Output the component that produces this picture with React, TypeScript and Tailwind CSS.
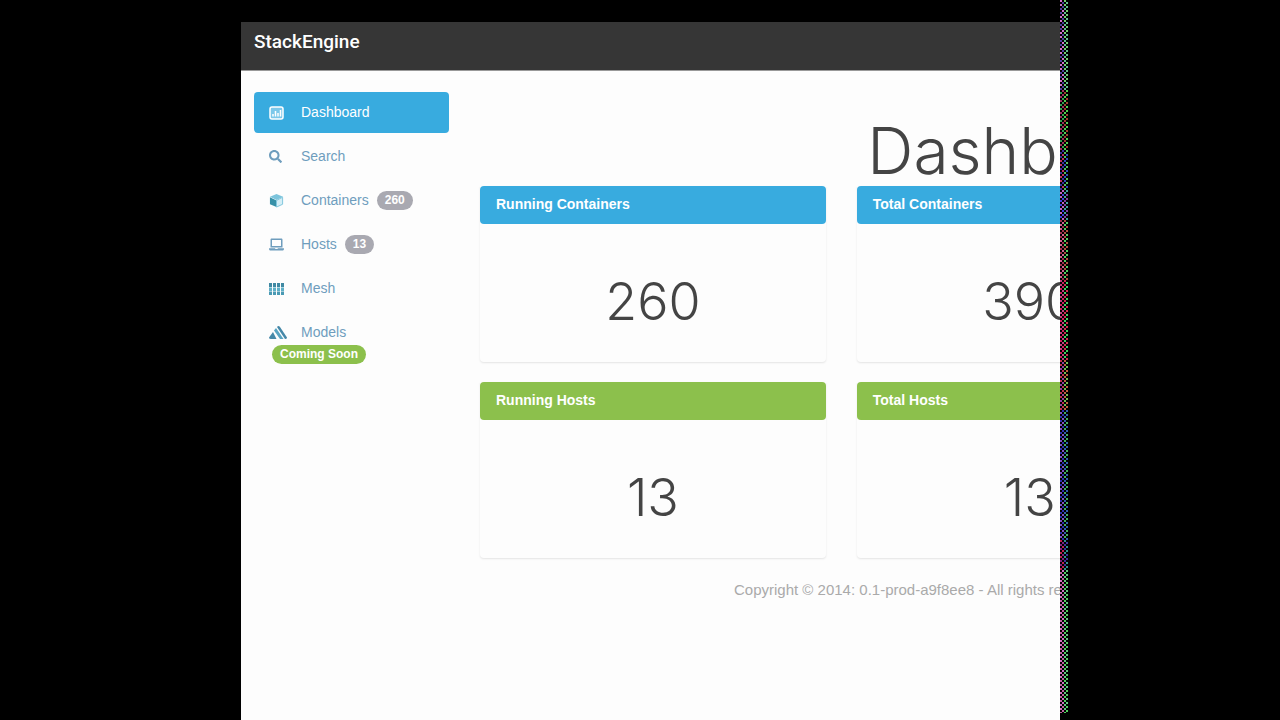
import React from "react";
import { FaLaptop, FaSearch } from "react-icons/fa";

const stats = [
  { title: "Running Containers", value: 260, color: "bg-[#38abdf]" },
  { title: "Total Containers", value: 390, color: "bg-[#38abdf]" },
  { title: "Running Hosts", value: 13, color: "bg-[#8cc04c]" },
  { title: "Total Hosts", value: 13, color: "bg-[#8cc04c]" },
];

// bands of the static, top to bottom: last row, then left and right colours
const noiseBands = [
  { end: 45, left: ["#d070c8", "#5040a0"], right: ["#70d070", "#60c090"] },
  { end: 75, left: ["#a03060", "#30a050"], right: ["#50d050", "#a04030"] },
  { end: 95, left: ["#c03060", "#4030a0"], right: ["#3050c0", "#50c060"] },
  { end: 110, left: ["#c060c0", "#4040e0"], right: ["#40a0a0", "#8040a0"] },
  { end: 140, left: ["#d06090", "#a03050"], right: ["#50d060", "#b05040"] },
  { end: 180, left: ["#d02060", "#c04080"], right: ["#40d060", "#d03050"] },
  { end: 205, left: ["#9040a0", "#c03050"], right: ["#70c050", "#c06040"] },
  { end: 270, left: ["#3030b0", "#8050c0"], right: ["#3060b0", "#40b060"] },
  { end: 285, left: ["#802080", "#c02050"], right: ["#4030a0", "#309090"] },
  { end: 357, left: ["#d070c0", "#c060a0"], right: ["#60c880", "#50d060"] },
];

function ChartIcon() {
  return (
    <svg className="size-4" viewBox="0 0 16 16" fill="none" stroke="currentColor">
      <rect x="1" y="2" width="13" height="12" rx="2" fill="#7cc8ea" strokeWidth="1.5" />
      <path d="M4 11.500V9M6.500 11.500V6M9 11.500V8M11.500 11.500V5" strokeWidth="1.5" />
    </svg>
  );
}

function CubeIcon() {
  return (
    <svg className="size-[15px]" viewBox="0 0 16 16">
      <path d="M1 4.500L8 8v7L1 12z" fill="#3791a8" />
      <path d="M1 4l7-3 7 3-7 3.500z" fill="#7cc4dc" />
      <path d="M8 8l6.500-3.500V12L8 15z" fill="#d4eef6" stroke="#7cc4dc" />
    </svg>
  );
}

function MeshIcon() {
  return (
    <svg className="size-4" viewBox="0 0 16 16">
      {[0, 4, 8, 12].map((x) => (
        <g key={x}>
          <rect x={x} y="2" width="3" height="4" fill="#4089a3" />
          <rect x={x} y="6.5" width="3" height="3.5" fill="#5fb0c8" />
          <rect x={x} y="10.5" width="3" height="3.5" fill="#4a9ab4" />
        </g>
      ))}
    </svg>
  );
}

function ModelsIcon() {
  return (
    <svg className="h-4 w-[18px]" viewBox="0 0 18 16">
      <path d="M4 7L0 12.500Q0 14 2 14h5.500z" fill="#4588a8" />
      <path d="M5 5.500L7 3l7.500 11H11z" fill="#58a4c2" />
      <path d="M8 2q1.500-2 3 0l7 10.500q0 1.500-2 1.500z" fill="#4588a8" />
    </svg>
  );
}

function NavLink({ icon, label, badge = "", active = false }) {
  return (
    <a
      href="#"
      className={
        active
          ? "flex h-[41px] items-center rounded bg-[#38abdf] px-[15px] text-white"
          : "flex h-[41px] items-center rounded px-[15px] text-[#6f9dbd]"
      }
    >
      <span className="w-8">{icon}</span>
      {label}
      {badge && (
        <span className="ml-2 rounded-full bg-[#a9a9b1] px-2 text-xs leading-[19px] font-bold text-white">
          {badge}
        </span>
      )}
    </a>
  );
}

function StatCard({ title, value, color }) {
  return (
    <section className="rounded-b shadow-[0_1px_2px_rgba(0,0,0,0.1)]">
      <h2 className={`h-[38px] rounded px-4 text-[14px] leading-9 font-bold text-white ${color}`}>
        {title}
      </h2>
      <p className="pt-12 pb-[30px] text-center font-[Inter] text-[52px] leading-[60px] font-light text-[#444]">
        {value}
      </p>
    </section>
  );
}

// strip of coloured static down the right edge of the recording
function NoiseStrip() {
  const rows = Array.from({ length: 357 }, (_, row) => row);
  return (
    <svg className="mb-[7px] w-2 shrink-0 bg-black" aria-hidden="true">
      <defs>
        <pattern id="noise" width="8" height="714" patternUnits="userSpaceOnUse">
          {rows.map((row) => {
            const band = noiseBands.find((b) => row < b.end) || noiseBands[0];
            return [row % 2, (row % 2) + 2].map((col) => (
              <rect
                key={`${row}-${col}`}
                x={col * 2}
                y={row * 2}
                width="2"
                height="2"
                fill={(col < 2 ? band.left : band.right)[(row * row + (row >> 2)) % 2]}
              />
            ));
          })}
        </pattern>
      </defs>
      <rect width="100%" height="100%" fill="url(#noise)" />
    </svg>
  );
}

export default function App() {
  return (
    <div className="flex min-h-screen bg-black pr-[212px] pl-[241px] font-['Liberation_Sans',sans-serif]">
      <div className="mt-[22px] min-w-0 flex-1 overflow-hidden bg-[#fdfdfd]">
        {/* the page is wider than the recorded area and runs off its right side */}
        <div className="w-[165%]">
          <header className="h-[49px] border-b border-[#999] bg-[#363636] px-[13px]">
            <a href="#" className="font-[Roboto] text-[19px] leading-10 font-medium text-white">
              StackEngine
            </a>
          </header>
          <div className="flex gap-[31px] px-[13px]">
            <nav className="mt-[21px] flex w-[195px] shrink-0 flex-col gap-[3px] text-[14px]">
              <NavLink icon={<ChartIcon />} label="Dashboard" active />
              <NavLink icon={<FaSearch className="size-[13px]" />} label="Search" />
              <NavLink icon={<CubeIcon />} label="Containers" badge="260" />
              <NavLink icon={<FaLaptop className="size-[15px]" />} label="Hosts" badge="13" />
              <NavLink icon={<MeshIcon />} label="Mesh" />
              <div>
                <NavLink icon={<ModelsIcon />} label="Models" />
                <span className="-mt-2 ml-[18px] block w-fit rounded-full bg-[#8cc04c] px-2 text-xs leading-[19px] font-bold text-white">
                  Coming Soon
                </span>
              </div>
            </nav>
            <main className="min-w-0 flex-1 pt-11">
              <h1 className="text-center font-[Inter] text-[64px] leading-[71px] font-light text-[#444]">
                Dashboard
              </h1>
              <div className="grid grid-cols-3 gap-x-[31px] gap-y-5">
                {stats.map((stat, i) => (
                  <div key={stat.title} className={i % 2 === 0 ? "col-start-1" : "col-start-2"}>
                    <StatCard {...stat} />
                  </div>
                ))}
              </div>
              <footer className="pt-5 pl-[254px] text-[15px] leading-6 text-[#aaa]">
                Copyright © 2014: 0.1-prod-a9f8ee8 - All rights reserved.
              </footer>
            </main>
          </div>
        </div>
      </div>
      <NoiseStrip />
    </div>
  );
}
